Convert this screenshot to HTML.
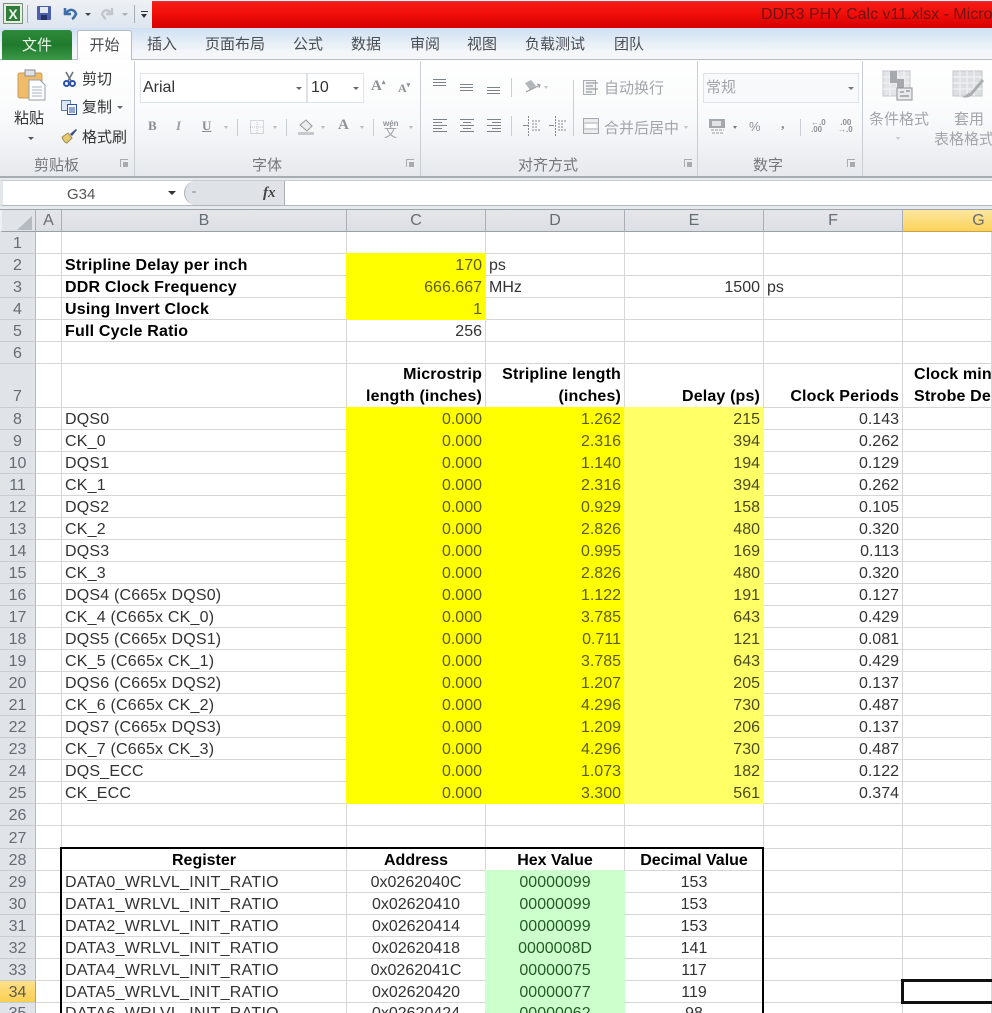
<!DOCTYPE html>
<html><head><meta charset="utf-8"><title>DDR3 PHY Calc</title>
<style>
*{box-sizing:border-box}
html,body{margin:0;padding:0;width:992px;height:1013px;overflow:hidden}
body{background:#fff;font-family:"Liberation Sans",Arial,sans-serif}
#p{position:absolute;left:0;top:0;width:992px;height:1013px;overflow:hidden;background:#fff}
.a{position:absolute;white-space:nowrap}
.z{font-family:"WenQuanYi Zen Hei","Noto Sans CJK SC","Liberation Sans",sans-serif;font-size:15px;line-height:18px;color:#4a4d52}
.g{color:#a2a5aa}
.sep{position:absolute;width:1px;background:#c9ced4}
svg{position:absolute;overflow:visible}
table{position:absolute;left:0;top:232px;border-collapse:separate;border-spacing:0;table-layout:fixed;width:992px;font-size:16px;color:#333}
td,th{height:22px;padding:2px 3px 0;border-right:1px solid #d6d6d6;border-bottom:1px solid #d6d6d6;font-weight:normal;white-space:nowrap;overflow:hidden;line-height:19px;vertical-align:bottom}
th{background:#e0e3e8;color:#666c74;border-right:1px solid #b4b9c0;border-bottom:1px solid #c8ccd2;text-align:center;font-size:16px;padding:2px 0 0}
.r{text-align:right}.c{text-align:center}.b{font-weight:bold;color:#000}
.s{letter-spacing:.2px}.t{letter-spacing:.28px}
.y{background:#ff0;border-color:#ff0;color:#5d5d12;box-shadow:-1px -1px 0 #ff0}
.l{background:#ff6;border-color:#ff6;color:#4a4a20;box-shadow:-1px -1px 0 #ff6}
.gn{background:#cfc;border-color:#cfc;text-align:center;color:#245a24;box-shadow:-1px -1px 0 #cfc}
td.w{white-space:normal;line-height:21.5px;padding-top:0;height:44px;letter-spacing:.15px}
tr.e td,tr.e th{height:10px;padding:0;border-bottom:0;vertical-align:top;line-height:21px}
tr.e div{height:10px;overflow:hidden;padding:0 3px}
.hd{position:absolute;top:210px;height:22px;background:linear-gradient(#e4e6ea,#dcdfe4);border-right:1px solid #a9afb7;border-bottom:1px solid #9aa0a8;text-align:center;font-size:16px;line-height:22px;color:#666c74}
</style></head><body><div id="p">

<!-- title bar -->
<div class="a" style="left:0;top:0;width:992px;height:28px;background:linear-gradient(#eef1f5,#dde5ef)"></div>
<div class="a" style="left:152px;top:1px;width:840px;height:27px;background:linear-gradient(#d8353a 0,#f51a14 8%,#f20f0a 45%,#d40000 100%)"></div>
<div class="a" style="left:761px;top:5px;width:231px;overflow:hidden;font-size:16px;line-height:20px;color:#6e1414">DDR3 PHY Calc v11.xlsx - Micro</div>
<svg style="left:3px;top:3px" width="20" height="21"><rect x=".5" y=".5" width="19" height="20" fill="#e6efe2" stroke="#77907a"/><rect x="3" y="3" width="14" height="15" fill="#2f7d3a"/><text x="10" y="16" text-anchor="middle" font-family="Liberation Sans" font-weight="bold" font-size="14" fill="#eef7ea">X</text></svg>
<div class="sep" style="left:27px;top:5px;height:18px;background:#a8adb4"></div>
<svg style="left:37px;top:6px" width="15" height="15"><rect width="14" height="14" rx="1" fill="#4a5fa8"/><rect x="3" y="1" width="8" height="6" fill="#e4e8f2"/><rect x="4" y="9" width="6" height="5" fill="#26306a"/></svg>
<svg style="left:63px;top:6px" width="15" height="15"><path d="M2 2v6h6M3 8c2-5 8-6 10 0-1 2-2 4-4 5" fill="none" stroke="#3d6ea8" stroke-width="2.6"/></svg>
<div class="a" style="left:85px;top:13px;border:3px solid transparent;border-top:3px solid #444"></div>
<svg style="left:100px;top:6px" width="14" height="15"><path d="M12 2v6H6M11 8C9 3 4 3 2 8c1 2 2 4 4 5" fill="none" stroke="#c2c6cb" stroke-width="2.4"/></svg>
<div class="a" style="left:122px;top:13px;border:3px solid transparent;border-top:3px solid #a9adb2"></div>
<div class="sep" style="left:134px;top:5px;height:18px;background:#a8adb4"></div>
<div class="a" style="left:141px;top:11px;width:7px;height:1px;background:#333"></div>
<div class="a" style="left:141px;top:14px;border:3.5px solid transparent;border-top:4px solid #333"></div>

<!-- tabs -->
<div class="a" style="left:0;top:28px;width:992px;height:32px;background:linear-gradient(#cfe0f3,#f2f5f9 70%,#f6f7f9)"></div>
<div class="a" style="left:0;top:59px;width:992px;height:1px;background:#b9bdc3"></div>
<div class="a z" style="left:2px;top:30px;width:70px;height:30px;background:linear-gradient(#2f8a3c,#1f7a2c 50%,#3d9a48);border-radius:3px 3px 0 0;color:#e9f5e9;text-align:center;line-height:29px">文件</div>
<div class="a z" style="left:77px;top:30px;width:55px;height:30px;background:linear-gradient(#fff,#fdfdfe);border:1px solid #b9bdc3;border-bottom:0;border-radius:3px 3px 0 0;text-align:center;line-height:28px">开始</div>
<div class="a z" style="left:147px;top:35px">插入</div>
<div class="a z" style="left:205px;top:35px">页面布局</div>
<div class="a z" style="left:293px;top:35px">公式</div>
<div class="a z" style="left:351px;top:35px">数据</div>
<div class="a z" style="left:410px;top:35px">审阅</div>
<div class="a z" style="left:467px;top:35px">视图</div>
<div class="a z" style="left:525px;top:35px">负载测试</div>
<div class="a z" style="left:614px;top:35px">团队</div>

<!-- ribbon -->
<div class="a" style="left:0;top:60px;width:992px;height:116px;background:linear-gradient(#fff 0,#f9fafb 50%,#eef0f3 80%,#e6e9ed 100%)"></div>
<div class="a" style="left:0;top:176px;width:992px;height:2px;background:#a8adb3"></div>
<div class="a" style="left:0;top:178px;width:992px;height:3px;background:#e8ebee"></div>
<div class="sep" style="left:134px;top:61px;height:115px"></div>
<div class="sep" style="left:420px;top:61px;height:115px"></div>
<div class="sep" style="left:697px;top:61px;height:115px"></div>
<div class="sep" style="left:862px;top:61px;height:115px"></div>

<!-- clipboard -->
<svg style="left:18px;top:69px" width="28" height="31"><rect y="4" width="24" height="25" rx="2" fill="#f0bc6a" stroke="#c79a58"/><rect x="7" y="1" width="10" height="6" fill="#dfe2e6" stroke="#8a8f96"/><path d="M11 11h11l5 5v15H11z" fill="#fbfcfe" stroke="#9aa1aa"/><path d="M14 18h10M14 21h10M14 24h10M14 27h10" stroke="#a9b2c2"/></svg>
<div class="a z" style="left:14px;top:109px;color:#333">粘贴</div>
<div class="a" style="left:28px;top:137px;border:3px solid transparent;border-top:3px solid #555"></div>
<svg style="left:63px;top:71px" width="13" height="16"><path d="M3 1l5 9M10 1L5 10" stroke="#6a7280" stroke-width="1.6"/><circle cx="3.500" cy="12.500" r="2.500" fill="none" stroke="#2d52a8" stroke-width="2"/><circle cx="9.500" cy="12.500" r="2.500" fill="none" stroke="#2d52a8" stroke-width="2"/></svg>
<div class="a z" style="left:82px;top:70px;color:#333">剪切</div>
<svg style="left:61px;top:100px" width="17" height="15"><rect x=".5" y=".5" width="9" height="10" fill="#dbe6f6" stroke="#5f7fb5"/><rect x="6.500" y="4.500" width="9" height="10" fill="#f6f9fd" stroke="#2d52a8"/><path d="M8 8h6M8 10h6M8 12h6" stroke="#2d52a8"/></svg>
<div class="a z" style="left:82px;top:98px;color:#333">复制</div>
<div class="a" style="left:117px;top:106px;border:3px solid transparent;border-top:3px solid #666"></div>
<svg style="left:61px;top:128px" width="17" height="16"><path d="M1 9l6-4 4 5-5 5c-2 0-4-3-5-6z" fill="#e7c970" stroke="#9a8a4e"/><path d="M9 6l6-5 1 1-5 6z" fill="#344a8c"/></svg>
<div class="a z" style="left:82px;top:128px;color:#333">格式刷</div>
<div class="a z" style="left:34px;top:156px;color:#74777c">剪贴板</div>
<svg style="left:120px;top:159px" width="9" height="9"><path d="M.5 8V.5H8" fill="none" stroke="#a7abb0"/><rect x="3" y="3" width="5" height="5" fill="#a7abb0"/></svg>

<!-- font -->
<div class="a" style="left:140px;top:73px;width:167px;height:30px;background:#fff;border:1px solid #dfe2e6;font-size:16px;line-height:27px;padding-left:2px;color:#333">Arial</div>
<div class="a" style="left:296px;top:87px;border:3px solid transparent;border-top:3px solid #666"></div>
<div class="a" style="left:307px;top:73px;width:57px;height:30px;background:#fff;border:1px solid #dfe2e6;font-size:16px;line-height:27px;padding-left:3px;color:#333">10</div>
<div class="a" style="left:353px;top:87px;border:3px solid transparent;border-top:3px solid #666"></div>
<div class="a" style="left:371px;top:78px;font:bold 15px 'Liberation Serif',serif;color:#8c8f94">A<sup style="font-size:7px">▴</sup></div>
<div class="a" style="left:398px;top:81px;font:bold 12px 'Liberation Serif',serif;color:#8c8f94">A<sup style="font-size:7px">▾</sup></div>
<div class="a" style="left:148px;top:118px;font:bold 13px 'Liberation Serif',serif;color:#8a8d92">B</div>
<div class="a" style="left:176px;top:118px;font:italic bold 13px 'Liberation Serif',serif;color:#9a9da2">I</div>
<div class="a" style="left:202px;top:118px;font:bold 13px 'Liberation Serif',serif;color:#8a8d92;text-decoration:underline">U</div>
<div class="a" style="left:224px;top:126px;border:2.500px solid transparent;border-top:3px solid #bbb"></div>
<div class="sep" style="left:237px;top:119px;height:17px"></div>
<svg style="left:250px;top:120px" width="14" height="14"><rect x=".5" y=".5" width="13" height="13" fill="none" stroke="#b2b5ba" stroke-dasharray="1 1"/><path d="M7 0v14M0 7h14" stroke="#c4c7cb" stroke-dasharray="1 1"/></svg>
<div class="a" style="left:273px;top:126px;border:2.500px solid transparent;border-top:3px solid #bbb"></div>
<div class="sep" style="left:286px;top:119px;height:17px"></div>
<svg style="left:298px;top:118px" width="16" height="17"><path d="M2 7l6-5 6 6-5 5z" fill="#eceef0" stroke="#999"/><path d="M0 14h16v3H0z" fill="#c6c9cd"/></svg>
<div class="a" style="left:321px;top:126px;border:2.500px solid transparent;border-top:3px solid #bbb"></div>
<div class="a" style="left:338px;top:117px;font:bold 15px 'Liberation Serif',serif;color:#8e9196">A</div>
<div class="a" style="left:360px;top:126px;border:2.500px solid transparent;border-top:3px solid #bbb"></div>
<div class="sep" style="left:373px;top:119px;height:17px"></div>
<div class="a" style="left:383px;top:119px;font:bold 8px 'Liberation Sans';color:#8f9297">wén</div>
<div class="a z g" style="left:384px;top:127px;font-size:13px;line-height:10px">文</div>
<div class="a" style="left:409px;top:126px;border:2.500px solid transparent;border-top:3px solid #bbb"></div>
<div class="a z" style="left:252px;top:156px;color:#74777c">字体</div>
<svg style="left:406px;top:159px" width="9" height="9"><path d="M.5 8V.5H8" fill="none" stroke="#a7abb0"/><rect x="3" y="3" width="5" height="5" fill="#a7abb0"/></svg>

<!-- alignment -->
<svg style="left:432px;top:79px" width="70" height="18" stroke="#7e8186" fill="none"><path d="M1 .5h13M1 3.500h13M1 6.500h13"/><path d="M28 5.500h13M28 8.500h13M28 11.500h13"/><path d="M55 8.500h13M55 11.500h13M55 14.500h13"/></svg>
<div class="sep" style="left:511px;top:78px;height:19px"></div>
<svg style="left:523px;top:79px" width="22" height="16"><path d="M2 4l6-3 5 6-6 4z" fill="#b3b6ba"/><path d="M3 13L17 6M14 5l3 1-1 3" fill="none" stroke="#999"/></svg>
<div class="a" style="left:544px;top:86px;border:2.500px solid transparent;border-top:3px solid #c2c2c2"></div>
<div class="sep" style="left:573px;top:80px;height:56px"></div>
<svg style="left:583px;top:80px" width="16" height="15"><rect x=".5" y=".5" width="12" height="14" fill="#f1f2f3" stroke="#aaadb1"/><path d="M3 3h12M3 6h7M3 9h12M3 12h6" stroke="#888b90"/></svg>
<div class="a z g" style="left:604px;top:79px">自动换行</div>
<svg style="left:432px;top:119px" width="70" height="14" stroke="#7e8186" fill="none"><path d="M1 .5h14M1 3.500h9M1 6.500h14M1 9.500h9M1 12.500h14"/><path d="M28 .5h14M31 3.500h8M28 6.500h14M31 9.500h8M28 12.500h14"/><path d="M55 .5h14M60 3.500h9M55 6.500h14M60 9.500h9M55 12.500h14"/></svg>
<div class="sep" style="left:511px;top:116px;height:20px"></div>
<svg style="left:522px;top:116px" width="45" height="20" stroke="#85888d" fill="none"><path d="M10 5h8M10 8h6M10 11h6M10 14h8M6.500 0v20" stroke-dasharray="2 1"/><path d="M1 9.500h5"/><path d="M36 5h8M36 8h6M36 11h6M36 14h8M33.500 0v20" stroke-dasharray="2 1"/><path d="M27 9.500h5"/></svg>
<svg style="left:583px;top:118px" width="16" height="16"><rect x=".5" y=".5" width="15" height="15" fill="#ececed" stroke="#a5a8ac"/><path d="M1 5h14M1 11h14" stroke="#b5b8bc"/><rect x="3" y="6" width="10" height="4" fill="#fff"/></svg>
<div class="a z g" style="left:604px;top:119px">合并后居中</div>
<div class="a" style="left:684px;top:126px;border:2.500px solid transparent;border-top:3px solid #c2c2c2"></div>
<div class="a z" style="left:518px;top:156px;color:#74777c">对齐方式</div>
<svg style="left:684px;top:159px" width="9" height="9"><path d="M.5 8V.5H8" fill="none" stroke="#a7abb0"/><rect x="3" y="3" width="5" height="5" fill="#a7abb0"/></svg>

<!-- number -->
<div class="a z g" style="left:703px;top:73px;width:156px;height:30px;border:1px solid #e0e3e6;background:#f8f9fa;line-height:25px;padding-left:2px">常规</div>
<div class="a" style="left:848px;top:87px;border:3px solid transparent;border-top:3px solid #777"></div>
<svg style="left:709px;top:119px" width="17" height="16"><rect width="16" height="9" fill="#a4a7ab"/><rect x="3" y="2" width="9" height="5" fill="#e2e4e6"/><path d="M2 11h13M3 14h12" stroke="#999" stroke-dasharray="3 1"/></svg>
<div class="a" style="left:733px;top:126px;border:2.500px solid transparent;border-top:3px solid #777"></div>
<div class="a" style="left:749px;top:119px;font-size:13px;color:#8d9095">%</div>
<div class="a" style="left:781px;top:117px;font:bold 14px 'Liberation Serif',serif;color:#85888d">,</div>
<div class="sep" style="left:800px;top:119px;height:17px"></div>
<div class="a" style="left:811px;top:119px;font:bold 8px/7px 'Liberation Sans';color:#8d9095;white-space:pre">←.0
.00</div>
<div class="a" style="left:838px;top:119px;font:bold 8px/7px 'Liberation Sans';color:#8d9095;white-space:pre"> .00
→.0</div>
<div class="a z" style="left:753px;top:156px;color:#74777c">数字</div>
<svg style="left:847px;top:159px" width="9" height="9"><path d="M.5 8V.5H8" fill="none" stroke="#a7abb0"/><rect x="3" y="3" width="5" height="5" fill="#a7abb0"/></svg>

<!-- styles -->
<svg style="left:883px;top:71px" width="30" height="30"><rect width="27" height="25" fill="#e3e5e8" stroke="#c4c7cb"/><path d="M7 0v25M14 0v25M21 0v25M0 6h27M0 12h27M0 18h27" stroke="#f4f5f6"/><rect x="7" y="0" width="7" height="12" fill="#a5a8ad"/><rect x="14" y="8" width="7" height="10" fill="#a5a8ad"/><rect x="14" y="17" width="15" height="12" fill="#e8eaec" stroke="#8f9297"/><path d="M17 21h4M17 25h9M23 20h4" stroke="#777"/></svg>
<div class="a z g" style="left:869px;top:110px">条件格式</div>
<div class="a" style="left:896px;top:137px;border:2.500px solid transparent;border-top:3px solid #c5c5c5"></div>
<svg style="left:953px;top:71px" width="32" height="30"><rect width="29" height="25" fill="#dcdee1" stroke="#c4c7cb"/><path d="M7 0v25M14 0v25M21 0v25M0 6h29M0 12h29M0 18h29" stroke="#f4f5f6"/><path d="M29 8L17 22c-3 0-4 3-8 4 3 1 8 1 11-3L31 10z" fill="#a9acb0"/></svg>
<div class="a z g" style="left:954px;top:110px">套用</div>
<div class="a z g" style="left:934px;top:130px;width:58px;overflow:hidden">表格格式</div>

<!-- formula bar -->
<div class="a" style="left:0;top:180px;width:992px;height:26px;background:#fff;border-top:1px solid #c9cdd2;border-bottom:1px solid #b2b7bd;border-left:3px solid #e4e7ea"></div>
<div class="a" style="left:0;top:206px;width:992px;height:3px;background:#e8ebee"></div>
<div class="a" style="left:0;top:209px;width:992px;height:1px;background:#9fa5ac"></div>
<div class="a" style="left:67px;top:186px;font-size:15px;line-height:18px;color:#555">G34</div>
<div class="a" style="left:168px;top:191px;border:4px solid transparent;border-top:4px solid #333"></div>
<div class="a" style="left:184px;top:181px;width:101px;height:24px;background:#dfe2e6;border-left:1px solid #aab0b6;border-right:1px solid #aab0b6;border-radius:12px 0 0 12px"></div>
<div class="a" style="left:192px;top:191px;width:4px;height:2px;background:#aeb3b9"></div>
<div class="a" style="left:263px;top:185px;font:italic bold 15px 'Liberation Serif',serif;color:#444"><i>fx</i></div>

<!-- headers -->
<div class="hd" style="left:0;width:36px;background:#e0e3e7;border-left:2px solid #eef0f2"></div>
<svg style="left:17px;top:216px" width="15" height="14"><path d="M15 0v14H0z" fill="#b6bbc1"/></svg>
<div class="hd" style="left:36px;width:26px">A</div>
<div class="hd" style="left:62px;width:285px">B</div>
<div class="hd" style="left:347px;width:139px">C</div>
<div class="hd" style="left:486px;width:139px">D</div>
<div class="hd" style="left:625px;width:139px">E</div>
<div class="hd" style="left:764px;width:139px">F</div>
<div class="hd" style="left:903px;width:89px;background:linear-gradient(#fde7a0,#fbd35a);border-bottom-color:#c9a24a;text-indent:62px;border-right:0">G</div>

<table>
<colgroup><col style="width:36px"><col style="width:26px"><col style="width:285px"><col style="width:139px"><col style="width:139px"><col style="width:139px"><col style="width:139px"><col style="width:89px"></colgroup>
<tr><th>1</th><td></td><td></td><td></td><td></td><td></td><td></td><td></td></tr>
<tr><th>2</th><td></td><td class="b s">Stripline Delay per inch</td><td class="y r">170</td><td>ps</td><td></td><td></td><td></td></tr>
<tr><th>3</th><td></td><td class="b s">DDR Clock Frequency</td><td class="y r">666.667</td><td>MHz</td><td class="r">1500</td><td>ps</td><td></td></tr>
<tr><th>4</th><td></td><td class="b s">Using Invert Clock</td><td class="y r">1</td><td></td><td></td><td></td><td></td></tr>
<tr><th>5</th><td></td><td class="b s">Full Cycle Ratio</td><td class="r">256</td><td></td><td></td><td></td><td></td></tr>
<tr><th>6</th><td></td><td></td><td></td><td></td><td></td><td></td><td></td></tr>
<tr><th style="height:44px;line-height:21.500px;padding-top:0">7</th><td></td><td></td><td class="r b w">Microstrip<br>length (inches)</td><td class="r b w">Stripline length<br>(inches)</td><td class="r b w">Delay (ps)</td><td class="r b w">Clock Periods</td><td class="b w" style="padding-left:11px;white-space:nowrap">Clock min<br>Strobe Delay</td></tr>
<tr><th>8</th><td></td><td class="s">DQS0</td><td class="y r">0.000</td><td class="y r">1.262</td><td class="l r">215</td><td class="r">0.143</td><td></td></tr>
<tr><th>9</th><td></td><td class="s">CK_0</td><td class="y r">0.000</td><td class="y r">2.316</td><td class="l r">394</td><td class="r">0.262</td><td></td></tr>
<tr><th>10</th><td></td><td class="s">DQS1</td><td class="y r">0.000</td><td class="y r">1.140</td><td class="l r">194</td><td class="r">0.129</td><td></td></tr>
<tr><th>11</th><td></td><td class="s">CK_1</td><td class="y r">0.000</td><td class="y r">2.316</td><td class="l r">394</td><td class="r">0.262</td><td></td></tr>
<tr><th>12</th><td></td><td class="s">DQS2</td><td class="y r">0.000</td><td class="y r">0.929</td><td class="l r">158</td><td class="r">0.105</td><td></td></tr>
<tr><th>13</th><td></td><td class="s">CK_2</td><td class="y r">0.000</td><td class="y r">2.826</td><td class="l r">480</td><td class="r">0.320</td><td></td></tr>
<tr><th>14</th><td></td><td class="s">DQS3</td><td class="y r">0.000</td><td class="y r">0.995</td><td class="l r">169</td><td class="r">0.113</td><td></td></tr>
<tr><th>15</th><td></td><td class="s">CK_3</td><td class="y r">0.000</td><td class="y r">2.826</td><td class="l r">480</td><td class="r">0.320</td><td></td></tr>
<tr><th>16</th><td></td><td class="s">DQS4 (C665x DQS0)</td><td class="y r">0.000</td><td class="y r">1.122</td><td class="l r">191</td><td class="r">0.127</td><td></td></tr>
<tr><th>17</th><td></td><td class="s">CK_4 (C665x CK_0)</td><td class="y r">0.000</td><td class="y r">3.785</td><td class="l r">643</td><td class="r">0.429</td><td></td></tr>
<tr><th>18</th><td></td><td class="s">DQS5 (C665x DQS1)</td><td class="y r">0.000</td><td class="y r">0.711</td><td class="l r">121</td><td class="r">0.081</td><td></td></tr>
<tr><th>19</th><td></td><td class="s">CK_5 (C665x CK_1)</td><td class="y r">0.000</td><td class="y r">3.785</td><td class="l r">643</td><td class="r">0.429</td><td></td></tr>
<tr><th>20</th><td></td><td class="s">DQS6 (C665x DQS2)</td><td class="y r">0.000</td><td class="y r">1.207</td><td class="l r">205</td><td class="r">0.137</td><td></td></tr>
<tr><th>21</th><td></td><td class="s">CK_6 (C665x CK_2)</td><td class="y r">0.000</td><td class="y r">4.296</td><td class="l r">730</td><td class="r">0.487</td><td></td></tr>
<tr><th>22</th><td></td><td class="s">DQS7 (C665x DQS3)</td><td class="y r">0.000</td><td class="y r">1.209</td><td class="l r">206</td><td class="r">0.137</td><td></td></tr>
<tr><th>23</th><td></td><td class="s">CK_7 (C665x CK_3)</td><td class="y r">0.000</td><td class="y r">4.296</td><td class="l r">730</td><td class="r">0.487</td><td></td></tr>
<tr><th>24</th><td></td><td class="s">DQS_ECC</td><td class="y r">0.000</td><td class="y r">1.073</td><td class="l r">182</td><td class="r">0.122</td><td></td></tr>
<tr><th>25</th><td></td><td class="s">CK_ECC</td><td class="y r">0.000</td><td class="y r">3.300</td><td class="l r">561</td><td class="r">0.374</td><td></td></tr>
<tr><th>26</th><td></td><td></td><td></td><td></td><td></td><td></td><td></td></tr>
<tr><th style="height:23px">27</th><td style="height:23px"></td><td></td><td></td><td></td><td></td><td></td><td></td></tr>
<tr><th>28</th><td></td><td class="c b">Register</td><td class="c b">Address</td><td class="c b">Hex Value</td><td class="c b">Decimal Value</td><td></td><td></td></tr>
<tr><th>29</th><td></td><td class="t">DATA0_WRLVL_INIT_RATIO</td><td class="c">0x0262040C</td><td class="gn">00000099</td><td class="c">153</td><td></td><td></td></tr>
<tr><th>30</th><td></td><td class="t">DATA1_WRLVL_INIT_RATIO</td><td class="c">0x02620410</td><td class="gn">00000099</td><td class="c">153</td><td></td><td></td></tr>
<tr><th>31</th><td></td><td class="t">DATA2_WRLVL_INIT_RATIO</td><td class="c">0x02620414</td><td class="gn">00000099</td><td class="c">153</td><td></td><td></td></tr>
<tr><th>32</th><td></td><td class="t">DATA3_WRLVL_INIT_RATIO</td><td class="c">0x02620418</td><td class="gn">0000008D</td><td class="c">141</td><td></td><td></td></tr>
<tr><th>33</th><td></td><td class="t">DATA4_WRLVL_INIT_RATIO</td><td class="c">0x0262041C</td><td class="gn">00000075</td><td class="c">117</td><td></td><td></td></tr>
<tr><th style="background:linear-gradient(#fde08a,#fbcf52);color:#5a5a50;border-right-color:#c9a24a">34</th><td></td><td class="t">DATA5_WRLVL_INIT_RATIO</td><td class="c">0x02620420</td><td class="gn">00000077</td><td class="c">119</td><td></td><td></td></tr>
<tr class="e"><th><div>35</div></th><td></td><td class="t"><div>DATA6_WRLVL_INIT_RATIO</div></td><td class="c"><div>0x02620424</div></td><td class="gn"><div>00000062</div></td><td class="c"><div>98</div></td><td></td><td></td></tr>
</table>

<!-- black outline table -->
<div class="a" style="left:60px;top:847px;width:704px;height:166px;border:2px solid #000;border-bottom:0"></div>
<!-- selection -->
<div class="a" style="left:901px;top:979px;width:91px;height:25px;border:3px solid #111;border-right:0"></div>
</div></body></html>
